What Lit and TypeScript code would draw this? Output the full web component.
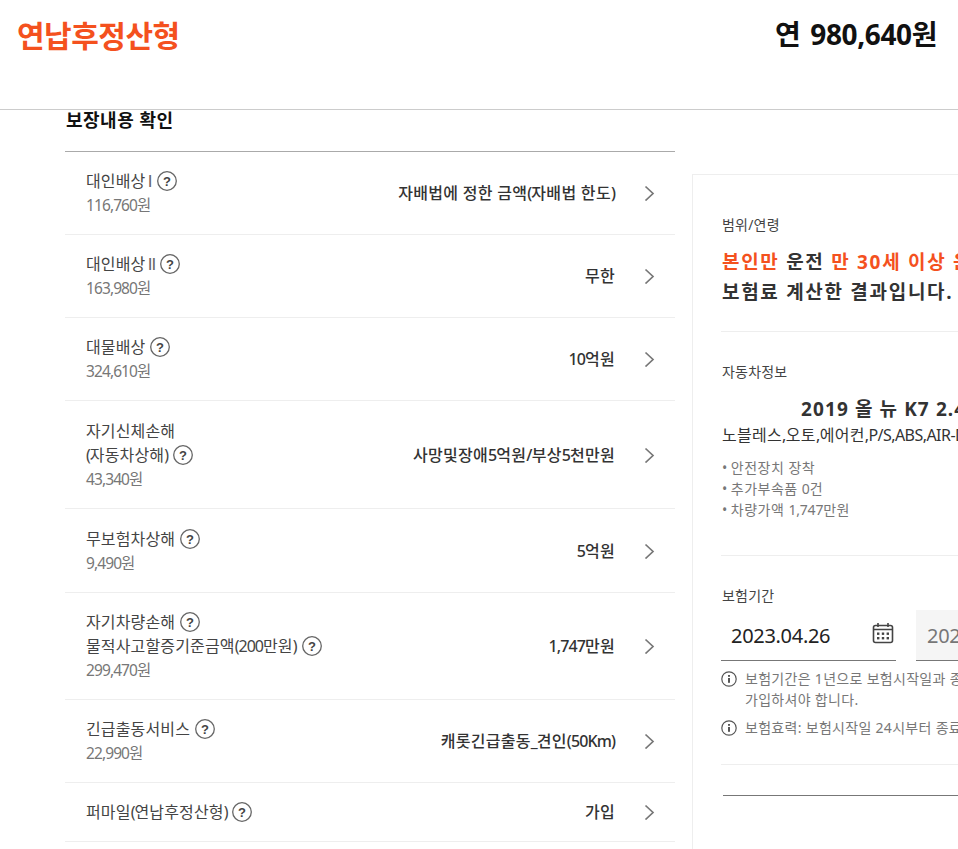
import { LitElement, html, css, svg } from "lit";
import { customElement } from "lit/decorators.js";

const q = html`<svg class="q" viewBox="0 0 20 20"><circle cx="10" cy="10" r="9.3" fill="none" stroke="#666" stroke-width="1.3"/><text x="10" y="14.6" text-anchor="middle" font-size="13" font-weight="700" fill="#444" font-family="Liberation Sans">?</text></svg>`;
const chev = html`<svg class="chev" viewBox="0 0 11 16"><path d="M1.5 1.5 L9 8.5 L1.5 15.5" fill="none" stroke="#777" stroke-width="1.7"/></svg>`;
const info = html`<svg class="info" viewBox="0 0 16 16"><circle cx="8" cy="8" r="7.2" fill="none" stroke="#555" stroke-width="1.2"/><rect x="7.1" y="7" width="1.8" height="4.8" fill="#444"/><rect x="7.1" y="4" width="1.8" height="1.8" fill="#444"/></svg>`;
const cal = html`<svg class="cal" viewBox="0 0 22 22"><rect x="1.5" y="3.5" width="19" height="17" rx="2" fill="none" stroke="#444" stroke-width="1.6"/><path d="M1.5 7.5h19M6 1v4M16 1v4" stroke="#444" stroke-width="1.6"/>${svg`<g fill="#444"><rect x="5" y="10.5" width="2.4" height="2.4"/><rect x="9.8" y="10.5" width="2.4" height="2.4"/><rect x="14.6" y="10.5" width="2.4" height="2.4"/><rect x="5" y="15" width="2.4" height="2.4"/><rect x="9.8" y="15" width="2.4" height="2.4"/><rect x="14.6" y="15" width="2.4" height="2.4"/></g>`}</svg>`;

/* Latin runs sit tighter than the Hangul around them in the reference. */
const t = (s: string) =>
  s.split(/([0-9A-Za-z(),._\/-]+)/).map((part, i) => (i % 2 ? html`<span class="n">${part}</span>` : part));

const rows = [
  { l: ["대인배상"], rn: "I", p: "116,760원", v: "자배법에 정한 금액(자배법 한도)", h: 83 },
  { l: ["대인배상"], rn: "II", p: "163,980원", v: "무한", h: 83 },
  { l: ["대물배상"], p: "324,610원", v: "10억원", h: 83 },
  { l: ["자기신체손해", "(자동차상해)"], p: "43,340원", v: "사망및장애5억원/부상5천만원", h: 108 },
  { l: ["무보험차상해"], p: "9,490원", v: "5억원", h: 84 },
  { l: ["자기차량손해", "물적사고할증기준금액(200만원)"], p: "299,470원", v: "1,747만원", h: 107, both: true },
  { l: ["긴급출동서비스"], p: "22,990원", v: "캐롯긴급출동_견인(50Km)", h: 83 },
  { l: ["퍼마일(연납후정산형)"], p: "", v: "가입", h: 59 },
];

@customElement("app-root")
export class AppRoot extends LitElement {
  static styles = css`
    :host { display: block; width: 958px; height: 849px; overflow: hidden; position: relative; font-family: "Noto Sans", "Noto Sans CJK KR", sans-serif; color: #111; background: #fff; }
    .top { height: 110px; box-sizing: border-box; border-bottom: 1px solid #ccc; display: flex; justify-content: space-between; padding: 12px 21px 0 17px; background: #fff; }
    .plan { font-size: 30px; font-weight: 700; color: #f4511e; line-height: 48px; letter-spacing: -0.5px; }
    .price { font-size: 28px; font-weight: 700; line-height: 44px; color: #111; word-spacing: 3px; letter-spacing: -0.4px; }
    .main { display: flex; align-items: flex-start; padding-left: 65px; }
    .left { width: 610px; flex: none; }
    .h { font-size: 18px; font-weight: 700; line-height: 20px; height: 41px; border-bottom: 1px solid #aaa; letter-spacing: 0.5px; text-indent: 1px; }
    .row { display: flex; align-items: center; justify-content: space-between; box-sizing: border-box; border-bottom: 1px solid #eee; padding: 0 20px 0 21px; }
    .name { font-size: 16px; line-height: 24px; color: #444; letter-spacing: 0.15px; }
    .line { display: flex; align-items: center; gap: 5px; height: 24px; }
    .line .txt { white-space: pre; }
    .name .n { letter-spacing: -1px; }
    .rn { font-family: "Liberation Sans", sans-serif; font-size: 17px; line-height: 1; color: #666; margin-left: -2px; letter-spacing: -1px; }
    .p { font-size: 15.5px; line-height: 24px; color: #777; letter-spacing: -0.9px; }
    .val { display: flex; align-items: center; gap: 29px; font-size: 16px; font-weight: 500; color: #333; letter-spacing: 0.3px; }
    .val > span { padding-bottom: 2px; }
    .val .n { letter-spacing: -0.9px; }
    .q { width: 20px; height: 20px; flex: none; }
    .chev { width: 11px; height: 16px; flex: none; }
    .right { margin: 64px 0 0 17px; width: 400px; flex: none; border: 1px solid #eee; border-right: none; height: 700px; box-sizing: border-box; padding: 40px 0 0 28px; overflow: hidden; white-space: nowrap; }
    .lab { font-size: 14px; line-height: 20px; color: #444; letter-spacing: 0.2px; margin-left: 1px; }
    .big { font-size: 19px; font-weight: 700; line-height: 30px; letter-spacing: 1.7px; color: #333; margin: 12px 0 0 1px; }
    .big b { color: #f4511e; font-weight: 700; }
    .sep { border-top: 1px solid #eee; }
    .car { font-size: 19px; font-weight: 700; line-height: 26px; padding-left: 80px; margin-top: 14px; letter-spacing: 1.1px; color: #333; }
    .opt { font-size: 16px; line-height: 24px; color: #333; letter-spacing: 0.3px; margin: 1px 0 0 1px; }
    .opt .n { letter-spacing: -0.55px; }
    ul { list-style: none; margin: 10px 0 0 1px; padding: 0; }
    li { font-size: 14px; line-height: 21px; color: #777; letter-spacing: 0.5px; display: flex; gap: 3px; }
    li .n { letter-spacing: -0.2px; }
    .dates { display: flex; gap: 20px; margin-top: 4px; }
    .date { flex: none; width: 175px; height: 51px; border-bottom: 1px solid #777; box-sizing: border-box; display: flex; align-items: center; justify-content: space-between; padding: 0 2px 0 10px; font-size: 20px; color: #222; letter-spacing: -0.3px; }
    .date.off { background: #f5f5f5; color: #777; width: 200px; padding-left: 11px; }
    .cal { width: 22px; height: 22px; margin-bottom: 5px; }
    .note { display: flex; gap: 8px; font-size: 14px; line-height: 21px; color: #777; width: 400px; margin-top: 7px; letter-spacing: 0.3px; }
    .info { width: 16px; height: 16px; flex: none; margin-top: 3px; }
  `;
  render() {
    return html`
      <div class="top"><div class="plan">연납후정산형</div><div class="price">연 980,640원</div></div>
      <div class="main">
        <div class="left">
          <div class="h">보장내용 확인</div>
          ${rows.map((r) => html`<div class="row" style="height:${r.h}px">
            <div>
              <div class="name">${r.l.map((s, i) => html`<div class="line"><span class="txt">${t(s)}${r.rn ? html` <span class="rn">${r.rn}</span>` : ""}</span>${i === r.l.length - 1 || r.both ? q : ""}</div>`)}</div>
              ${r.p ? html`<div class="p">${r.p}</div>` : ""}
            </div>
            <div class="val"><span>${t(r.v)}</span>${chev}</div>
          </div>`)}
        </div>
        <div class="right">
          <div class="lab">범위/연령</div>
          <div class="big"><b>본인만</b> 운전 <b>만 30세 이상 운전</b><br/>보험료 계산한 결과입니다.</div>
          <div class="sep" style="margin-top:24px"></div>
          <div class="lab" style="margin-top:30px">자동차정보</div>
          <div class="car">2019 올 뉴 K7 2.4</div>
          <div class="opt">${t("노블레스,오토,에어컨,P/S,ABS,AIR-D")}</div>
          <ul><li><span>•</span><span>안전장치 장착</span></li><li><span>•</span><span>추가부속품 ${t("0")}건</span></li><li><span>•</span><span>차량가액 ${t("1,747")}만원</span></li></ul>
          <div class="sep" style="margin-top:35px"></div>
          <div class="lab" style="margin-top:30px">보험기간</div>
          <div class="dates"><div class="date">2023.04.26${cal}</div><div class="date off">2024.04.26</div></div>
          <div class="note">${info}<span>보험기간은 1년으로 보험시작일과 종료일을<br/>가입하셔야 합니다.</span></div>
          <div class="note">${info}<span>보험효력: 보험시작일 24시부터 종료일</span></div>
          <div class="sep" style="margin-top:26px"></div>
          <div style="border-top:1px solid #777;margin-top:30px;margin-left:2px"></div>
        </div>
      </div>`;
  }
}
